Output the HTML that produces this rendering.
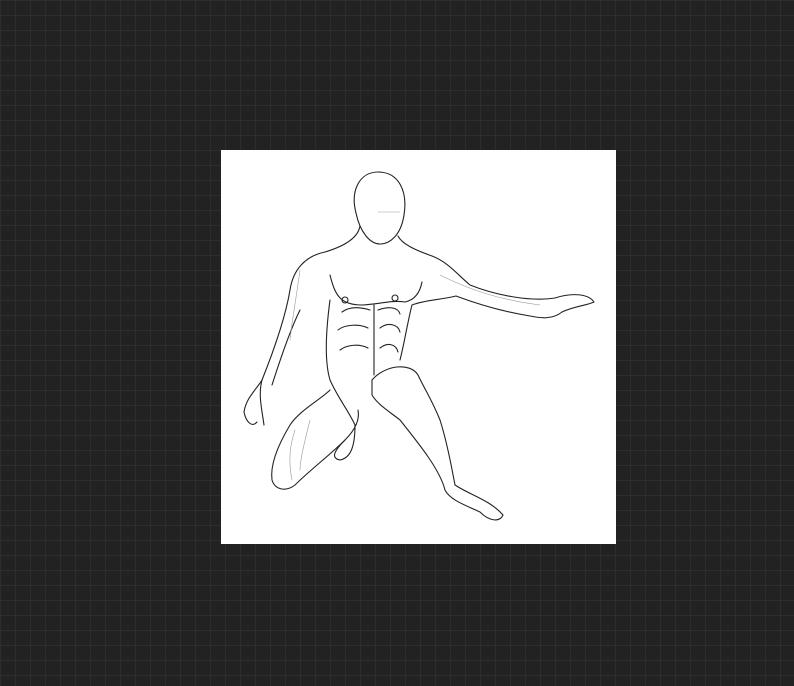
<!DOCTYPE html>
<html><head><style>
html,body{margin:0;padding:0}
body{width:794px;height:686px;overflow:hidden;background-color:#222;
background-image:linear-gradient(to right,#2d2d2d 1px,transparent 1px),linear-gradient(to bottom,#2d2d2d 1px,transparent 1px);
background-size:15px 15px;position:relative}
.card{position:absolute;left:221px;top:150px;width:395px;height:394px;background:#fff}
svg{position:absolute;left:0;top:0}
</style></head><body>
<div class="card">
<svg width="395" height="394" viewBox="221 150 395 394" fill="none" stroke="#222" stroke-width="1.1" stroke-linecap="round" stroke-linejoin="round">
<path d="M356 213 C350 190 360 172 378 172 C398 172 408 190 404 215 C401 235 390 244 380 244 C370 244 360 232 356 213 Z"/>
<path d="M378 212 L400 212" stroke="#999" stroke-width=".6"/>
<path d="M360 226 C358 238 345 246 325 252"/>
<path d="M398 236 C402 244 415 250 432 256"/>
<path d="M325 252 C305 256 293 270 290 290 C285 320 272 355 262 380 C256 390 246 398 244 412 C246 422 252 428 257 422"/>
<path d="M262 380 C258 395 262 410 264 425"/>
<path d="M272 385 C280 360 290 330 300 310"/>
<path d="M432 256 C448 262 458 275 470 285 C495 295 530 302 555 298 C570 293 588 293 594 302 C585 306 575 306 562 312 C552 320 540 318 530 316 C505 312 480 305 456 296"/>
<path d="M456 296 C440 300 425 300 412 305 C408 320 405 340 400 360"/>
<path d="M330 275 C335 295 340 305 362 305 C380 304 392 300 405 302 C415 300 420 292 422 282"/>
<path d="M342 312 C350 306 360 307 370 310 M378 310 C388 306 398 307 400 314"/>
<path d="M338 330 C345 324 360 324 368 328 M380 328 C388 322 398 324 400 332"/>
<path d="M340 350 C348 344 360 344 368 348 M380 348 C388 342 396 344 398 352"/>
<path d="M374 305 L374 375"/>
<path d="M330 300 C326 330 324 360 330 380 C338 398 348 410 355 425"/>
<path d="M372 380 C385 365 410 362 418 375 C425 390 432 400 440 420 C448 445 452 470 455 485 C470 495 490 500 503 515 C500 522 490 522 480 512 C465 505 450 500 445 490 C440 470 420 445 400 420 C390 412 378 405 372 395 Z"/>
<path d="M330 390 C320 400 300 410 290 425 C278 445 270 465 272 480 C275 490 286 492 295 485 C310 470 330 455 345 440 C355 430 360 420 358 410"/>
<path d="M345 440 C335 450 330 458 340 460 C350 458 355 448 355 425"/>
<path d="M295 430 C290 445 288 460 292 480 M310 420 C305 440 300 460 300 470" stroke="#999" stroke-width=".6"/>
<path d="M300 270 C296 300 292 320 290 340 M440 275 C470 290 500 300 540 305" stroke="#999" stroke-width=".6"/>
<circle cx="345" cy="300" r="3"/><circle cx="395" cy="298" r="3"/>
</svg>
</div>
</body></html>
